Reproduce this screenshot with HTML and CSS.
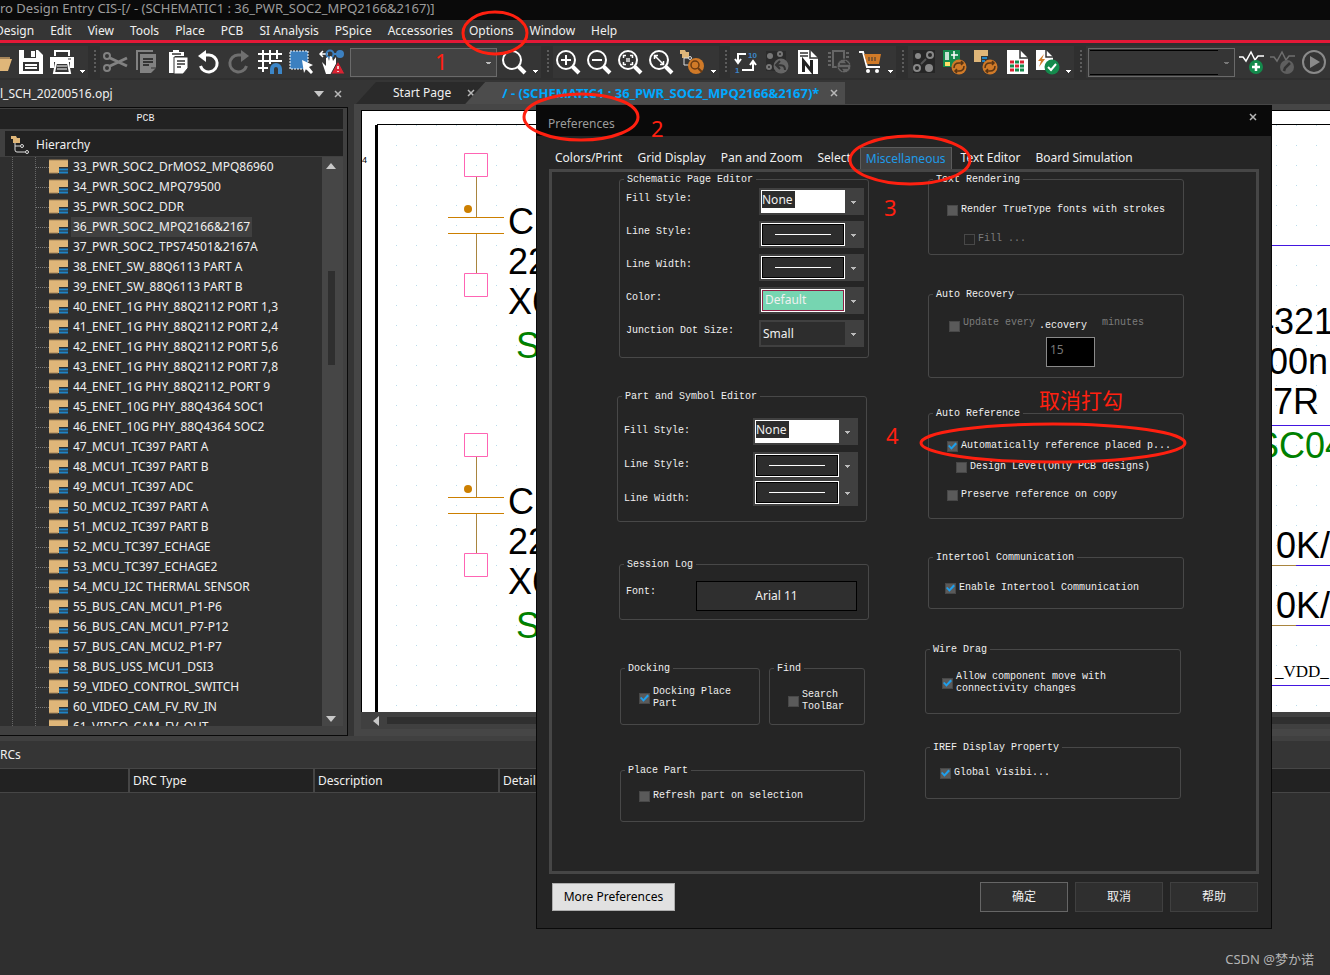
FILE: index.html
```html
<!DOCTYPE html>
<html lang="en">
<head>
  <meta charset="UTF-8">
  <meta name="viewport" content="width=device-width, initial-scale=1.0">
  <title>Design Entry CIS</title>
  <link rel="stylesheet" href="styles.css">
</head>
<body>
  <svg class="defs" aria-hidden="true">
    <symbol id="page" viewBox="0 0 20 16">
      <path d="M0 1h19v7h-9v6H0z" fill="#dfb679"/>
      <path d="M0 1h19M0 14h9" stroke="#a5855a"/>
      <path d="M10 10.500h9M10 13.500h9" stroke="#1f83c6" stroke-width="2"/>
    </symbol>
    <symbol id="lens" viewBox="0 0 26 26">
      <circle cx="11" cy="11" r="9" fill="none" stroke="#fff" stroke-width="2"/>
      <path d="M17.500 17.500l6.500 6.500" stroke="#fff" stroke-width="4"/>
    </symbol>
  </svg>

  <header class="titlebar">ro Design Entry CIS-[/ - (SCHEMATIC1 : 36_PWR_SOC2_MPQ2166&amp;2167)]</header>

  <nav class="menubar">
    <button>Design</button>
    <button>Edit</button>
    <button>View</button>
    <button>Tools</button>
    <button>Place</button>
    <button>PCB</button>
    <button>SI Analysis</button>
    <button>PSpice</button>
    <button>Accessories</button>
    <button>Options</button>
    <button>Window</button>
    <button>Help</button>
  </nav>

  <div class="toolbar">
    <div class="tools first">
      <button aria-label="Open"><svg viewBox="0 0 26 26"><path d="M0 4h12v4h11v3H0z" fill="#a5855a"/><path d="M2 10h23l-4 12H2z" fill="#dfb679"/></svg></button>
      <button aria-label="Save"><svg viewBox="0 0 26 26"><path d="M1 1h19l5 5v19H1z" fill="#fff"/><path d="M6 1h12v8H6zM5 13h16v9H5z" fill="#353535"/><path d="M13 2h4v6h-4z" fill="#fff"/><path d="M7 16h12M7 19h12" stroke="#fff" stroke-width="2"/></svg></button>
      <button aria-label="Print"><svg viewBox="0 0 26 26"><path d="M6 7V2h14v5" fill="none" stroke="#fff" stroke-width="2"/><path d="M1 8h24v11h-4v-6H5v6H1z" fill="#fff"/><path d="M7 14h12l2 10H5z" fill="none" stroke="#fff" stroke-width="2"/><path d="M8 17h10M8 20h10" stroke="#fff"/><path d="M19 10h3" stroke="#353535"/></svg></button>
      <i class="more"></i>
    </div>
    <i class="grip"></i>
    <div class="tools">
      <button aria-label="Cut"><svg viewBox="0 0 26 26"><g fill="none" stroke="#828282" stroke-width="2"><circle cx="5" cy="7" r="3"/><circle cx="5" cy="19" r="3"/><path d="M8 9l17 8M8 17l17-8" stroke-width="3"/></g></svg></button>
      <button aria-label="Copy"><svg viewBox="0 0 26 26"><path d="M5 20H4V2h16" fill="none" stroke="#828282" stroke-width="2"/><path d="M7 5h16v14l-5 5H7z" fill="#828282"/><path d="M10 10h10M10 13h10M10 16h6" stroke="#353535" stroke-width="2"/><path d="M18 19h5" stroke="#353535"/></svg></button>
      <button aria-label="Paste"><svg viewBox="0 0 26 26"><path d="M5 3h4V1h6v2h5v4h-9v17H5z" fill="#fff"/><path d="M10 8h14v11l-5 6h-9z" fill="#fff" stroke="#353535"/><path d="M13 12h8M13 15h8M13 18h4M8 5h9" stroke="#353535" stroke-width="1.500"/></svg></button>
      <button aria-label="Undo"><svg viewBox="0 0 26 26"><path d="M8 6h6a8.500 8.500 0 1 1-8.500 11" fill="none" stroke="#fff" stroke-width="3"/><path d="M3 7l8-6v12z" fill="#fff"/></svg></button>
      <button aria-label="Redo"><svg viewBox="0 0 26 26"><path d="M18 6h-6a8.500 8.500 0 1 0 8.500 11" fill="none" stroke="#6f6f6f" stroke-width="3"/><path d="M23 7l-8-6v12z" fill="#6f6f6f"/></svg></button>
      <button aria-label="Snap to grid"><svg viewBox="0 0 26 26"><path d="M6 1v22M13 1v14M20 1v9M1 5h24M1 12h24M1 19h10" stroke="#fff" stroke-width="2"/><path d="M12 26v-6a6 6 0 0 1 14 0v6z" fill="#353535"/><path d="M15 25v-5a4 4 0 0 1 8 0v5" fill="none" stroke="#3c86c8" stroke-width="4"/></svg></button>
      <button aria-label="Area select"><svg viewBox="0 0 26 26"><path d="M2 2h18v18H2z" fill="#3c80c0" stroke="#fff" stroke-dasharray="2 1"/><path d="M14 11l11 5-4 2 4 5-2 2-5-5-2 4z" fill="#fff"/></svg></button>
      <button aria-label="Drag connected"><svg viewBox="0 0 26 26"><path d="M1 5h8M4 2L1 5l3 3" fill="none" stroke="#fff" stroke-width="1.500"/><circle cx="11" cy="5" r="3.500" fill="none" stroke="#3c80c0" stroke-width="2"/><path d="M14 5h5" stroke="#3c80c0" stroke-width="2"/><circle cx="21" cy="5" r="4" fill="#3c80c0"/><path d="M3 13l4 4V9l2-1 1 4 1-5 2 1 1 4 3-4v8l-4 9H7z" fill="#fff"/><path d="M19 12l7 13H12z" fill="#d92332" stroke="#353535"/><path d="M19 17v3M19 22v1" stroke="#fff" stroke-width="1.500"/></svg></button>
      <select class="tool-select" aria-label="Part"><option></option></select>
      <button aria-label="Search"><svg viewBox="0 0 26 26"><use href="#lens"/></svg></button>
      <i class="more"></i>
    </div>
    <i class="grip"></i>
    <div class="tools">
      <button aria-label="Zoom in"><svg viewBox="0 0 26 26"><use href="#lens"/><path d="M6 11h10M11 6v10" stroke="#fff" stroke-width="2"/></svg></button>
      <button aria-label="Zoom out"><svg viewBox="0 0 26 26"><use href="#lens"/><path d="M6 11h10" stroke="#fff" stroke-width="2"/></svg></button>
      <button aria-label="Zoom to region"><svg viewBox="0 0 26 26"><use href="#lens"/><path d="M6.500 9V6.500H9M13 6.500h2.500V9M15.500 13v2.500H13M9 15.500H6.500V13" fill="none" stroke="#fff" stroke-width="1.500"/><path d="M9 9h4v4H9z" fill="#bbb"/></svg></button>
      <button aria-label="Zoom to all"><svg viewBox="0 0 26 26"><use href="#lens"/><path d="M7 7l8 8M6.500 10V6.500H10M12 15.500h3.500V12" fill="none" stroke="#fff" stroke-width="1.500"/></svg></button>
      <button aria-label="Find in hierarchy"><svg viewBox="0 0 26 26"><path d="M1 1h5l1 2h3v6H3V5H1z" fill="#dfb679"/><path d="M5 9v7h7M5 9h4" fill="none" stroke="#ddd"/><circle cx="11" cy="9" r="1.500" fill="none" stroke="#ddd"/><circle cx="17" cy="17" r="8" fill="#d07a28"/><circle cx="16" cy="16" r="4" fill="none" stroke="#6b3b12" stroke-width="1.500"/><path d="M19 19l4 4" stroke="#6b3b12" stroke-width="2"/></svg></button>
      <i class="more"></i>
    </div>
    <i class="grip"></i>
    <div class="tools">
      <button aria-label="Annotate"><svg viewBox="0 0 26 26"><path d="M13 5H5v8M2 10l3 4 3-4M9 21h11v-8M17 16l3-4 3 4" fill="none" stroke="#fff" stroke-width="2"/><text x="15" y="9" class="icon-num">10</text><text x="2" y="24" class="icon-num">1</text></svg></button>
      <button aria-label="Back annotate"><svg viewBox="0 0 26 26"><path d="M2 2h20v20H2z" fill="#2b2b2b"/><circle cx="6" cy="7" r="3" fill="#777"/><g fill="none" stroke="#777" stroke-width="2"><circle cx="16" cy="5" r="2"/><circle cx="5" cy="18" r="2"/></g><circle cx="17" cy="17" r="7.500" fill="#666"/><path d="M21 21c0-5-3-5-8-5M16 12l-4 4 4 4" fill="none" stroke="#333" stroke-width="2"/></svg></button>
      <button aria-label="Netlist"><svg viewBox="0 0 26 26"><path d="M3 1h12l8 8v16H3z" fill="#fff"/><path d="M15 1v8h8M5 4h8M5 7h8" fill="none" stroke="#353535" stroke-width="1.500"/><path d="M8.500 23V12l8 10V11" fill="none" stroke="#222" stroke-width="3"/></svg></button>
      <button aria-label="Cross reference"><svg viewBox="0 0 26 26"><path d="M7 2h11v16H7zM2 4h3M2 8h3M2 12h3M2 16h3M20 4h3M20 8h3" fill="none" stroke="#666" stroke-width="2"/><circle cx="18" cy="17" r="7" fill="#666" stroke="#353535"/><path d="M14 15h8l-3-3M22 19h-8l3 3" fill="none" stroke="#333" stroke-width="1.500"/></svg></button>
      <button aria-label="Bill of materials"><svg viewBox="0 0 26 26"><path d="M2 3h4l4 15h13" fill="none" stroke="#fff" stroke-width="2"/><path d="M7 5h17l-2 10H10z" fill="#d07a28"/><path d="M12 8v4M15 8v4M18 8v4" stroke="#353535"/><circle cx="11" cy="22" r="2" fill="#fff"/><circle cx="20" cy="22" r="2" fill="#fff"/></svg></button>
      <i class="more"></i>
    </div>
    <i class="grip"></i>
    <div class="tools">
      <button aria-label="New layout"><svg viewBox="0 0 26 26"><path d="M2 1h22v23H2z" fill="#262626"/><circle cx="7" cy="7" r="3" fill="#888"/><circle cx="18" cy="19" r="4" fill="#888"/><g fill="none" stroke="#888" stroke-width="2"><circle cx="19" cy="6" r="3"/><circle cx="6" cy="19" r="3"/><path d="M10 15l5-5" stroke="#555"/></g></svg></button>
      <button aria-label="Update board"><svg viewBox="0 0 26 26"><path d="M1 1h17v17H1z" fill="#148a4c"/><path d="M4 3v8M6 3v8M9 6h7M12 2v8" stroke="#fff" stroke-width="1.500"/><path d="M3 13h5v4H3z" fill="#ffdf67"/><circle cx="17" cy="18" r="7.500" fill="#d07a28"/><path d="M12 19q0-5 5-5h4M19 12l2 2-2 2M22 17q0 5-5 5h-4M15 24l-2-2 2-2" fill="none" stroke="#5a3513" stroke-width="1.500"/></svg></button>
      <button aria-label="Update schematic"><svg viewBox="0 0 26 26"><path d="M1 1h14v6H8v6H1z" fill="#dfb679"/><path d="M9 9h5M9 12h3" stroke="#1f83c6" stroke-width="2"/><circle cx="17" cy="18" r="7.500" fill="#d07a28"/><path d="M12 19q0-5 5-5h4M19 12l2 2-2 2M22 17q0 5-5 5h-4M15 24l-2-2 2-2" fill="none" stroke="#5a3513" stroke-width="1.500"/></svg></button>
      <button aria-label="Constraint sheet"><svg viewBox="0 0 26 26"><path d="M3 1h13l8 8v16H3z" fill="#fff"/><path d="M16 1v8h8" fill="none" stroke="#353535" stroke-width="1.500"/><path d="M6 13h4M16 13h4M11 17h4M6 21h4" stroke="#d92332" stroke-width="3"/><path d="M11 13h4M6 17h4M16 17h4M11 21h4M16 21h4" stroke="#148a4c" stroke-width="3"/></svg></button>
      <button aria-label="Design rules check"><svg viewBox="0 0 26 26"><path d="M1 1h10l7 7v10l-6 3H1z" fill="#fff"/><path d="M11 1v7h7" fill="none" stroke="#353535" stroke-width="1.500"/><path d="M9 5l-6 7h3l-2 6 6-8H7z" fill="#d07a28"/><circle cx="17" cy="18" r="7.500" fill="#148a4c"/><path d="M13 18l3 3 5-6" fill="none" stroke="#fff" stroke-width="2"/></svg></button>
      <i class="more"></i>
    </div>
    <i class="grip"></i>
    <div class="tools">
      <select class="tool-select dark" aria-label="Simulation profile"><option></option></select>
      <button aria-label="New simulation"><svg viewBox="0 0 26 26"><path d="M0 8h4l3 4 5-9 4 8 3-4h6" fill="none" stroke="#fff" stroke-width="1.500"/><circle cx="17" cy="18" r="7" fill="#148a4c"/><path d="M13 18h8M17 14v8" stroke="#fff" stroke-width="2.500"/></svg></button>
      <button aria-label="Edit simulation"><svg viewBox="0 0 26 26"><path d="M0 8h4l3 4 5-9 4 8 3-4h6" fill="none" stroke="#6f6f6f" stroke-width="1.500"/><circle cx="17" cy="18" r="7" fill="#5f5f5f"/><path d="M14 22l1-3 5-5" fill="none" stroke="#333" stroke-width="2.500"/></svg></button>
      <button aria-label="Run"><svg viewBox="0 0 26 26"><circle cx="13" cy="13" r="11" fill="none" stroke="#8a8a8a" stroke-width="2"/><path d="M9 7l10 6-10 6z" fill="#8a8a8a"/></svg></button>
    </div>
  </div>

  <main class="workspace">
    <aside class="sidebar">
      <div class="dock-title">
        <span>l_SCH_20200516.opj</span>
        <svg class="caret" viewBox="0 0 10 6"><path d="M0 0h10L5 6z"/></svg>
        <button class="close" aria-label="Close panel"><svg viewBox="0 0 8 8"><path d="M1 1l6 6M7 1L1 7"/></svg></button>
      </div>
      <div class="dock">
        <div class="dock-type">PCB</div>
        <div class="dock-tab">
          <svg viewBox="0 0 20 18"><path d="M1 0h5l1 2h3v5H3V3H1z" fill="#dfb679"/><g fill="none" stroke="#ddd"><path d="M5 7v7q0 2 2 2h8M5 10h5"/><circle cx="12" cy="10" r="1.500"/><circle cx="17" cy="16" r="1.500"/></g></svg>
          Hierarchy
        </div>
        <div class="tree-box">
          <ul class="tree">
            <li><svg><use href="#page"/></svg><span>33_PWR_SOC2_DrMOS2_MPQ86960</span></li>
            <li><svg><use href="#page"/></svg><span>34_PWR_SOC2_MPQ79500</span></li>
            <li><svg><use href="#page"/></svg><span>35_PWR_SOC2_DDR</span></li>
            <li><svg><use href="#page"/></svg><span class="selected">36_PWR_SOC2_MPQ2166&amp;2167</span></li>
            <li><svg><use href="#page"/></svg><span>37_PWR_SOC2_TPS74501&amp;2167A</span></li>
            <li><svg><use href="#page"/></svg><span>38_ENET_SW_88Q6113 PART A</span></li>
            <li><svg><use href="#page"/></svg><span>39_ENET_SW_88Q6113 PART B</span></li>
            <li><svg><use href="#page"/></svg><span>40_ENET_1G PHY_88Q2112 PORT 1,3</span></li>
            <li><svg><use href="#page"/></svg><span>41_ENET_1G PHY_88Q2112 PORT 2,4</span></li>
            <li><svg><use href="#page"/></svg><span>42_ENET_1G PHY_88Q2112 PORT 5,6</span></li>
            <li><svg><use href="#page"/></svg><span>43_ENET_1G PHY_88Q2112 PORT 7,8</span></li>
            <li><svg><use href="#page"/></svg><span>44_ENET_1G PHY_88Q2112_PORT 9</span></li>
            <li><svg><use href="#page"/></svg><span>45_ENET_10G PHY_88Q4364 SOC1</span></li>
            <li><svg><use href="#page"/></svg><span>46_ENET_10G PHY_88Q4364 SOC2</span></li>
            <li><svg><use href="#page"/></svg><span>47_MCU1_TC397 PART A</span></li>
            <li><svg><use href="#page"/></svg><span>48_MCU1_TC397 PART B</span></li>
            <li><svg><use href="#page"/></svg><span>49_MCU1_TC397 ADC</span></li>
            <li><svg><use href="#page"/></svg><span>50_MCU2_TC397 PART A</span></li>
            <li><svg><use href="#page"/></svg><span>51_MCU2_TC397 PART B</span></li>
            <li><svg><use href="#page"/></svg><span>52_MCU_TC397_ECHAGE</span></li>
            <li><svg><use href="#page"/></svg><span>53_MCU_TC397_ECHAGE2</span></li>
            <li><svg><use href="#page"/></svg><span>54_MCU_I2C THERMAL SENSOR</span></li>
            <li><svg><use href="#page"/></svg><span>55_BUS_CAN_MCU1_P1-P6</span></li>
            <li><svg><use href="#page"/></svg><span>56_BUS_CAN_MCU1_P7-P12</span></li>
            <li><svg><use href="#page"/></svg><span>57_BUS_CAN_MCU2_P1-P7</span></li>
            <li><svg><use href="#page"/></svg><span>58_BUS_USS_MCU1_DSI3</span></li>
            <li><svg><use href="#page"/></svg><span>59_VIDEO_CONTROL_SWITCH</span></li>
            <li><svg><use href="#page"/></svg><span>60_VIDEO_CAM_FV_RV_IN</span></li>
            <li><svg><use href="#page"/></svg><span>61_VIDEO_CAM_FV_OUT</span></li>
          </ul>
          <div class="scroll-y">
            <svg class="caret" viewBox="0 0 10 6"><path d="M0 6h10L5 0z"/></svg>
            <i class="thumb"></i>
            <svg class="caret" viewBox="0 0 10 6"><path d="M0 0h10L5 6z"/></svg>
          </div>
        </div>
      </div>
    </aside>

    <section class="editor">
      <div class="file-tabs">
        <div class="file-tab">Start Page <button class="close" aria-label="Close Start Page"><svg viewBox="0 0 8 8"><path d="M1 1l6 6M7 1L1 7"/></svg></button></div>
        <div class="file-tab active">/ - (SCHEMATIC1 : 36_PWR_SOC2_MPQ2166&amp;2167)* <button class="close" aria-label="Close schematic"><svg viewBox="0 0 8 8"><path d="M1 1l6 6M7 1L1 7"/></svg></button></div>
      </div>
      <div class="frame">
        <svg class="sheet" viewBox="362 111 968 601" preserveAspectRatio="xMinYMin slice">
          <defs>
            <pattern id="dots" x="396" y="125" width="20" height="20" patternUnits="userSpaceOnUse"><path d="M0 0h1v1H0z" fill="#b5dcec"/></pattern>
            <g id="cap">
              <path d="M476.500 177v40M476.500 233v40" stroke="#a9853f"/>
              <path d="M448 217.500h56M448 233.500h56" stroke="#cc7f00"/>
              <circle cx="468" cy="209" r="4" fill="#cc7f00"/>
              <path d="M464.500 153.500h23v23h-23zM464.500 273.500h23v23h-23z" fill="none" stroke="#ff64b4"/>
              <g class="part-text">
                <text x="508" y="234">C</text>
                <text x="508" y="274">22</text>
                <text x="508" y="314">X6</text>
                <text x="516" y="358" class="green">S</text>
              </g>
            </g>
          </defs>
          <path d="M378 125h952v587H378z" fill="url(#dots)"/>
          <path d="M377 124.500h953" stroke="#000"/>
          <path d="M376.500 125v587" stroke="#000" stroke-width="3"/>
          <text x="362" y="163" class="zone">4</text>
          <use href="#cap"/>
          <use href="#cap" y="280"/>
          <g class="part-text">
            <text x="1254" y="334">4321</text>
            <text x="1248" y="374">100n</text>
            <text x="1273" y="414">7R</text>
            <text x="1255" y="458" class="green">SC04</text>
            <text x="1276" y="558">0K/</text>
            <text x="1276" y="618">0K/</text>
          </g>
          <text x="1275" y="677" class="net">_VDD_</text>
          <path d="M1260 245.500h70M1260 425.500h70M1296 565.500h34M1296 625.500h34M1260 685.500h70" stroke="#4316e0"/>
          <path d="M1260 565.500h36M1260 625.500h36" stroke="#a9853f"/>
        </svg>
        <div class="scroll-x">
          <svg viewBox="0 0 6 10"><path d="M6 0v10L0 5z"/></svg>
          <i></i>
        </div>
      </div>
    </section>
  </main>

  <section class="drc">
    <h2>RCs</h2>
    <table>
      <thead>
        <tr>
          <th></th>
          <th>DRC Type</th>
          <th>Description</th>
          <th>Detail</th>
        </tr>
      </thead>
    </table>
    <p class="credit">CSDN @梦か诺</p>
  </section>

  <form class="dialog">
    <div class="dialog-title">
      <h1>Preferences</h1>
      <button type="button" class="close" aria-label="Close"><svg viewBox="0 0 8 8"><path d="M1 1l6 6M7 1L1 7"/></svg></button>
    </div>
    <div class="tabs">
      <button type="button">Colors/Print</button>
      <button type="button">Grid Display</button>
      <button type="button">Pan and Zoom</button>
      <button type="button">Select</button>
      <button type="button" class="current">Miscellaneous</button>
      <button type="button">Text Editor</button>
      <button type="button">Board Simulation</button>
    </div>

    <div class="pane">
      <div class="column left">
        <fieldset class="page-editor">
          <legend>Schematic Page Editor</legend>
          <div class="settings">
            <div class="labels">
              <label for="fill1">Fill Style:</label>
              <label for="style1">Line Style:</label>
              <label for="width1">Line Width:</label>
              <label for="color1">Color:</label>
              <label for="dot1">Junction Dot Size:</label>
            </div>
            <div class="combos">
              <div class="combo"><select id="fill1" class="fill"><option>None</option></select></div>
              <div class="combo"><select id="style1" class="line"><option></option></select></div>
              <div class="combo"><select id="width1" class="line"><option></option></select></div>
              <div class="combo"><select id="color1" class="color"><option>Default</option></select></div>
              <div class="combo"><select id="dot1"><option>Small</option></select></div>
            </div>
          </div>
        </fieldset>

        <fieldset class="part-editor">
          <legend>Part and Symbol Editor</legend>
          <div class="settings">
            <div class="labels">
              <label for="fill2">Fill Style:</label>
              <label for="style2">Line Style:</label>
              <label for="width2">Line Width:</label>
            </div>
            <div class="combos">
              <div class="combo"><select id="fill2" class="fill"><option>None</option></select></div>
              <div class="combo"><select id="style2" class="line"><option></option></select></div>
              <div class="combo"><select id="width2" class="line"><option></option></select></div>
            </div>
          </div>
        </fieldset>

        <fieldset class="session">
          <legend>Session Log</legend>
          <div class="settings">
            <label for="font">Font:</label>
            <button type="button" id="font">Arial 11</button>
          </div>
        </fieldset>

        <div class="pair">
          <fieldset class="docking">
            <legend>Docking</legend>
            <div class="checks">
              <label><input type="checkbox" checked><span>Docking Place<br>Part</span></label>
            </div>
          </fieldset>
          <fieldset class="find">
            <legend>Find</legend>
            <div class="checks">
              <label><input type="checkbox"><span>Search<br>ToolBar</span></label>
            </div>
          </fieldset>
        </div>

        <fieldset class="place">
          <legend>Place Part</legend>
          <div class="checks">
            <label><input type="checkbox"><span>Refresh part on selection</span></label>
          </div>
        </fieldset>
      </div>

      <div class="column right">
        <fieldset class="rendering">
          <legend>Text Rendering</legend>
          <div class="checks">
            <label><input type="checkbox"><span>Render TrueType fonts with strokes</span></label>
            <label class="sub disabled"><input type="checkbox" disabled><span>Fill ...</span></label>
          </div>
        </fieldset>

        <fieldset class="recovery">
          <legend>Auto Recovery</legend>
          <div class="checks">
            <div class="update">
              <label class="disabled"><input type="checkbox"><span>Update every</span></label>
              <label for="minutes">.ecovery</label>
              <span class="disabled unit">minutes</span>
            </div>
            <input type="text" id="minutes" value="15">
          </div>
        </fieldset>

        <fieldset class="reference">
          <legend>Auto Reference</legend>
          <div class="checks">
            <label><input type="checkbox" checked><span>Automatically reference placed p...</span></label>
            <label class="nested"><input type="checkbox"><span>Design Level(Only PCB designs)</span></label>
            <label><input type="checkbox"><span>Preserve reference on copy</span></label>
          </div>
        </fieldset>

        <fieldset class="intertool">
          <legend>Intertool Communication</legend>
          <div class="checks">
            <label><input type="checkbox" checked><span>Enable Intertool Communication</span></label>
          </div>
        </fieldset>

        <fieldset class="wire outdent">
          <legend>Wire Drag</legend>
          <div class="checks">
            <label><input type="checkbox" checked><span>Allow component move with<br>connectivity changes</span></label>
          </div>
        </fieldset>

        <fieldset class="iref outdent">
          <legend>IREF Display Property</legend>
          <div class="checks">
            <label><input type="checkbox" checked><span>Global Visibi...</span></label>
          </div>
        </fieldset>
      </div>
    </div>

    <div class="dialog-footer">
      <button type="button" class="light">More Preferences</button>
      <button type="submit" class="ok">确定</button>
      <button type="button">取消</button>
      <button type="button">帮助</button>
    </div>
  </form>

  <!-- numbered steps drawn over the windows -->
  <svg class="notes" viewBox="0 0 1330 975">
    <g fill="none" stroke="#ff2010" stroke-width="3">
      <ellipse cx="495" cy="33" rx="32" ry="21"/>
      <ellipse cx="581" cy="117" rx="57" ry="23"/>
      <ellipse cx="910" cy="160" rx="60" ry="24"/>
      <ellipse cx="1053" cy="443" rx="132" ry="19"/>
    </g>
    <text x="435" y="70">1</text>
    <text x="651" y="137">2</text>
    <text x="884" y="216">3</text>
    <text x="886" y="444">4</text>
    <text x="1039" y="408" class="cjk">取消打勾</text>
  </svg>
</body>
</html>
```

FILE: styles.css
```css
* {
  box-sizing: border-box;
}
body {
  position: relative;
  display: flex;
  flex-direction: column;
  min-height: 100vh;
  margin: 0;
  overflow: hidden;
  background: #2f2f2f;
  color: #f0f0f0;
  font: 12px/20px "Noto Sans", "Noto Sans CJK SC", sans-serif;
}
button, select, input {
  font: inherit;
  color: inherit;
  margin: 0;
}
button {
  padding: 0;
  border: 0;
  background: none;
  white-space: nowrap;
}
svg {
  display: block;
}
.defs {
  position: absolute;
  width: 0;
  height: 0;
}

/* title and menu */
.titlebar {
  height: 20px;
  font-size: 13px;
  line-height: 16px;
  background: #0a0a0a;
  color: #9c9c9c;
  white-space: nowrap;
}
.menubar {
  display: flex;
  align-items: flex-end;
  gap: 16px;
  height: 23px;
  margin-left: -9px;
  padding-left: 4px;
  background: #353535;
  border-bottom: 3px solid #e31837;
}
.menubar button {
  line-height: 18px;
}

/* toolbar */
.toolbar {
  display: flex;
  height: 37px;
  padding: 3px 0 2px;
  background: #2f2f2f;
}
.tools {
  display: flex;
  align-items: center;
  background: #353535;
}
.tools.first {
  margin-left: -16px;
}
.tools button {
  width: 31px;
}
.tools button svg {
  width: 26px;
  height: 26px;
  margin: 0 auto;
}
.more {
  width: 11px;
  height: 26px;
  background: linear-gradient(#fff, #fff) 3px 21px / 5px 1px no-repeat,
    linear-gradient(#fff, #fff) 4px 22px / 3px 1px no-repeat,
    linear-gradient(#fff, #fff) 5px 23px / 1px 1px no-repeat;
}
.grip {
  width: 12px;
  margin: 4px 0 6px;
  background: repeating-linear-gradient(#5c5c5c 0 2px, transparent 2px 4px) 6px 0 / 2px 100% no-repeat;
}
.tool-select {
  width: 147px;
  height: 29px;
  margin: 0 2px;
  appearance: none;
  border: 1px solid #6a6a6a;
  border-radius: 0;
  background: linear-gradient(#bbb, #bbb) 135px 13px / 5px 1px no-repeat,
    linear-gradient(#bbb, #bbb) 136px 14px / 3px 1px no-repeat, #424242;
}
.tool-select.dark {
  background: linear-gradient(#777, #777) 135px 13px / 5px 1px no-repeat,
    linear-gradient(#777, #777) 136px 14px / 3px 1px no-repeat,
    linear-gradient(#000, #000) 1px 1px / 128px 1px no-repeat,
    linear-gradient(#000, #000) 1px 25px / 128px 1px no-repeat, #353535;
}
.icon-num {
  font: bold 8px "Liberation Sans", sans-serif;
  fill: #3c86c8;
}

/* project dock */
.workspace {
  display: flex;
  background: #353535;
}
.sidebar {
  width: 354px;
  flex: none;
}
.dock-title {
  display: flex;
  align-items: center;
  height: 27px;
  padding-right: 12px;
}
.dock-title span {
  flex: 1;
}
.caret {
  width: 10px;
  height: 6px;
  fill: #c8c8c8;
}
.close {
  width: 8px;
  height: 8px;
}
.close path {
  fill: none;
  stroke: #b8b8b8;
  stroke-width: 1.5;
}
.dock-title .close {
  margin-left: 10px;
}
.dock {
  width: 348px;
  padding: 1px 4px 9px 0;
  border: 1px solid #0a0a0a;
  border-left: 0;
  background: #404040;
}
.dock-type {
  height: 20px;
  padding-right: 52px;
  background: #222;
  font: 10px/20px "Liberation Mono", monospace;
  text-align: center;
}
.dock-tab {
  display: flex;
  align-items: center;
  gap: 6px;
  height: 25px;
  margin: 2px 0 1px 5px;
  padding: 2px 0 0 5px;
  background: #222;
}
.dock-tab svg {
  width: 20px;
  height: 18px;
}
.tree-box {
  display: flex;
  height: 569px;
  overflow: hidden;
}
.tree {
  flex: 1;
  margin: 0;
  padding: 0 0 0 36px;
  list-style: none;
  background: repeating-linear-gradient(#666 0 1px, transparent 1px 2px) 12px 0 / 1px 100% no-repeat,
    repeating-linear-gradient(#666 0 1px, transparent 1px 2px) 35px 0 / 1px 100% no-repeat, #2f2f2f;
}
.tree li {
  display: flex;
  align-items: center;
  height: 20px;
  white-space: nowrap;
}
.tree li::before {
  content: "";
  width: 13px;
  border-top: 1px dotted #777;
}
.tree svg {
  width: 20px;
  height: 16px;
  margin-right: 2px;
}
.tree span {
  padding: 0 2px;
}
.tree .selected {
  background: #404040;
}
.scroll-y {
  display: flex;
  flex-direction: column;
  align-items: center;
  width: 21px;
  padding: 6px 3px 4px 0;
  background: #464646;
}
.thumb {
  width: 7px;
  height: 94px;
  margin: 102px 0 auto;
  background: #2f2f2f;
}

/* schematic */
.editor {
  flex: 1;
  min-width: 0;
}
.file-tabs {
  display: flex;
  height: 24px;
  padding: 2px 0 0 2px;
}
.file-tab {
  display: flex;
  align-items: center;
  gap: 16px;
  padding: 0 10px 0 37px;
  background: #2a2a2a;
  clip-path: polygon(20px 0, 100% 0, 100% 100%, 0 100%);
  white-space: nowrap;
}
.file-tab.active {
  gap: 11px;
  margin-left: -20px;
  padding-right: 7px;
  background: #4c4c4c;
  color: #00a8ff;
  font-size: 13px;
  font-weight: bold;
}
.frame {
  padding: 6px 0 7px 7px;
  background: #464646;
}
.sheet {
  width: 100%;
  height: 602px;
  border: 1px solid #000;
  border-width: 1px 0 0 1px;
  background: #fff;
}
.part-text {
  font: 36px "Liberation Sans", sans-serif;
}
.green {
  fill: #008000;
}
.zone {
  font: 9px "Liberation Sans", sans-serif;
}
.net {
  font: 17px "Liberation Serif", serif;
}
.scroll-x {
  display: flex;
  align-items: center;
  gap: 8px;
  height: 17px;
  padding-left: 12px;
  background: #404040;
}
.scroll-x svg {
  width: 6px;
  height: 10px;
  fill: #c8c8c8;
}
.scroll-x i {
  flex: 1;
  height: 7px;
  background: #2f2f2f;
}

/* DRC list */
.drc {
  display: flex;
  flex: 1;
  flex-direction: column;
  border-top: 5px solid #404040;
}
.drc h2 {
  margin: 0;
  height: 27px;
  background: #353535;
  font: inherit;
  line-height: 28px;
}
.drc table {
  width: 100%;
  table-layout: fixed;
  border-collapse: collapse;
  background: #222;
}
.drc th {
  height: 24px;
  padding: 0 3px;
  border: 1px solid #464646;
  border-width: 1px 0 1px 2px;
  font-weight: normal;
  line-height: 20px;
  text-align: left;
}
.drc th:first-child {
  width: 129px;
  border-left: 0;
}
.drc th:nth-child(2), .drc th:nth-child(3) {
  width: 185px;
}
.credit {
  margin: auto 16px 6px auto;
  color: #b4b4b4;
  font-size: 13px;
}

/* preferences window */
.dialog {
  position: absolute;
  top: 105px;
  left: 536px;
  width: 736px;
  padding-bottom: 16px;
  border: 1px solid #0a0a0a;
  background: #252525;
}
.dialog-title {
  display: flex;
  justify-content: space-between;
  height: 30px;
  padding: 7px 14px 0 11px;
  background: #0a0a0a;
}
.dialog-title h1 {
  margin: 0;
  padding-top: 1px;
  color: #9c9c9c;
  font: inherit;
}
.tabs {
  display: flex;
  align-items: flex-end;
  gap: 3px;
  height: 33px;
  padding-left: 12px;
}
.tabs button {
  height: 22px;
  padding: 0 6px;
  line-height: 20px;
}
.tabs .current {
  border: 1px solid #5c5c5c;
  border-bottom: 0;
  padding: 0 5px;
  background: #404040;
  color: #1e9be8;
}
.pane {
  display: flex;
  justify-content: space-between;
  margin: 0 12px;
  height: 705px;
  padding: 1px 72px 0 67px;
  border: 3px solid #464646;
}
.column {
  display: grid;
  align-items: start;
  align-content: start;
}
.left {
  width: 250px;
  grid-template-rows: 217px 168px 104px 102px 58px;
}
.right {
  width: 256px;
  grid-template-rows: 115px 119px 144px 92px 98px 58px;
}
fieldset {
  min-width: 0;
  margin: 0;
  padding: 0;
  border: 1px solid #484848;
  border-radius: 3px;
}
fieldset, fieldset label {
  font: 10px/12px "Liberation Mono", monospace;
}
legend {
  margin-left: 4px;
  padding: 1px 3px 0;
  line-height: 11px;
}
.outdent {
  margin: 0 3px 0 -3px;
}
.page-editor { height: 185px; }
.part-editor { height: 132px; margin: 0 2px 0 -2px; }
.session { height: 62px; }
.docking, .find { height: 63px; }
.place, .intertool, .iref { height: 58px; }
.rendering { height: 82px; }
.recovery { height: 90px; }
.reference { height: 112px; }
.wire { height: 71px; }
.place { margin: 0 4px 0 1px; }

.settings {
  display: flex;
  justify-content: space-between;
  padding: 3px 4px 0 6px;
}
.part-editor .settings {
  padding: 16px 8px 0 6px;
}
.session .settings {
  padding: 11px 11px 0 6px;
}
.labels {
  display: flex;
  flex-direction: column;
  gap: 21px;
  padding-top: 5px;
}
.session label {
  padding-top: 5px;
}
.part-editor .labels {
  gap: 22px;
  padding-top: 7px;
}
.combos {
  display: flex;
  flex-direction: column;
  gap: 6px;
}
.part-editor .combos {
  gap: 0;
}
.part-editor .combo:first-child {
  margin-bottom: 7px;
}
.combo {
  width: 105px;
  height: 27px;
  padding: 2px;
  background: linear-gradient(#bbb, #bbb) 92px 13px / 5px 1px no-repeat,
    linear-gradient(#bbb, #bbb) 93px 14px / 3px 1px no-repeat,
    linear-gradient(#bbb, #bbb) 94px 15px / 1px 1px no-repeat, #404040;
}
.combo select {
  display: block;
  width: 84px;
  height: 23px;
  padding: 0 2px;
  appearance: none;
  border: 0;
  border-radius: 0;
  background: #2d2d2d;
  font: 12px/20px "Noto Sans", sans-serif;
}
.combo .fill {
  padding: 0 2px 3px 1px;
  background: linear-gradient(#2d2d2d, #2d2d2d) 1px 1px / 33px 17px no-repeat, #fff;
}
.combo .line {
  border: 1px solid #fff;
  outline: 1px solid #000;
  outline-offset: -2px;
  background: linear-gradient(#fff, #fff) center / 56px 1px no-repeat #2d2d2d;
}
.combo .color {
  border: 1px solid #fff;
  padding: 0 3px 2px;
  outline: 1px solid #8c2044;
  outline-offset: -2px;
  background: #76d5b1;
}
.session button {
  width: 161px;
  height: 30px;
  border: 1px solid #000;
  background: #2f2f2f;
  font: 12px/20px "Noto Sans", sans-serif;
}
.pair {
  display: grid;
  grid-template-columns: 140px 96px;
  gap: 9px;
  margin-left: 1px;
}

.checks {
  padding: 19px 0 0 18px;
}
.checks label {
  display: flex;
  align-items: center;
  gap: 3px;
}
.checks input[type="checkbox"] {
  display: grid;
  appearance: none;
  flex: none;
  width: 11px;
  height: 11px;
  border: 1px solid #484848;
  background: #5a5a5a;
}
.checks input[type="checkbox"]:checked::before {
  content: "";
  background: #1ea0ee;
  clip-path: polygon(0 50%, 15% 38%, 38% 62%, 82% 12%, 100% 28%, 38% 92%);
}
.checks input[type="checkbox"]:disabled {
  background: none;
}
.checks .disabled {
  color: #7c7c7c;
}
.checks .sub {
  margin: 17px 0 0 17px;
}
.docking .checks {
  padding-top: 12px;
}
.find .checks {
  padding-top: 15px;
}
.place .checks, .iref .checks {
  padding-top: 14px;
}
.iref .checks {
  padding-left: 14px;
}
.intertool .checks {
  padding-left: 16px;
}
.wire .checks {
  padding: 16px 0 0 16px;
}
.reference .checks {
  padding-top: 21px;
}
.reference .nested {
  margin: 9px 0 16px 9px;
}
.recovery .checks {
  padding: 17px 0 0 20px;
}
.update {
  display: flex;
  align-items: flex-end;
  gap: 4px;
  height: 15px;
}
.update label:first-child {
  align-items: flex-end;
}
.update span {
  padding-bottom: 3px;
}
.update .unit {
  margin-left: 11px;
}
#minutes {
  display: block;
  width: 49px;
  height: 30px;
  margin: 5px 0 0 97px;
  padding: 0 3px 6px;
  border: 1px solid #8a8a8a;
  background: #000;
  color: #777;
  font: 12px/20px "Noto Sans", sans-serif;
}

.dialog-footer {
  display: flex;
  align-items: center;
  gap: 7px;
  margin: 8px 13px 0 15px;
}
.dialog-footer button {
  width: 88px;
  height: 30px;
  border: 1px solid #404040;
  background: #2f2f2f;
}
.dialog-footer .ok {
  border-color: #666;
}
.dialog-footer .light {
  width: 123px;
  height: 28px;
  margin-right: auto;
  border-color: #adadad;
  background: #e1e1e1;
  color: #000;
}

.notes {
  position: absolute;
  top: 0;
  left: 0;
  width: 1330px;
  height: 975px;
  pointer-events: none;
}
.notes text {
  fill: #ff2010;
  font: 22px "Noto Sans", sans-serif;
}
.notes .cjk {
  font: 21px "Noto Sans CJK SC", sans-serif;
}
```
